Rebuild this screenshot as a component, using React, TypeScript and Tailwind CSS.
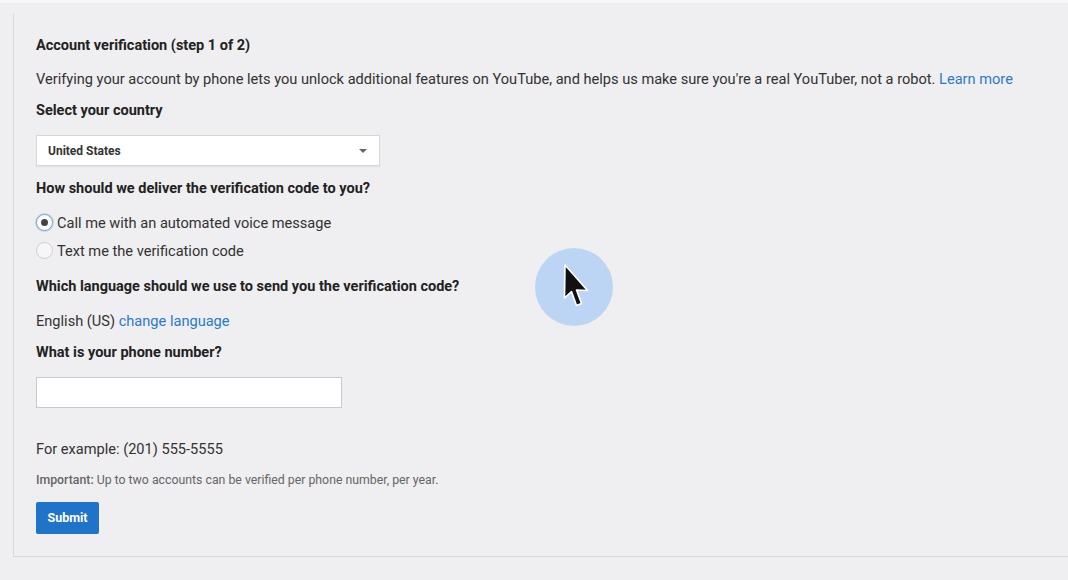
export default function App() {
  return (
    <div className="relative h-[580px] w-[1068px] overflow-hidden bg-[#efeef0] font-['Roboto','Liberation_Sans',sans-serif] text-[#222]">
      <div className="h-[3px] bg-[#f7f7f8]" />
      <div className="ml-[13px] mt-[10px] h-[544px] border-b border-l border-[#d9d8db] pl-[22px] pt-[25px]">
        <h1 className="text-[14.5px] font-bold leading-[16px]">Account verification (step 1 of 2)</h1>
        <p className="mt-[17px] text-[14.6px] leading-[16px] text-[#333]">
          Verifying your account by phone lets you unlock additional features on YouTube, and helps us make sure you're a real YouTuber, not a robot.{' '}
          <a className="text-[#2b7bcb]">Learn more</a>
        </p>
        <h2 className="mt-[16px] text-[14.5px] font-bold leading-[16px]">Select your country</h2>
        <div className="mt-[16px] flex h-[31px] w-[344px] items-center justify-between border border-[#d6d6d8] bg-white pl-[11px] pr-[12px] shadow-[0_1px_1px_rgba(0,0,0,0.05)]">
          <span className="text-[12px] font-bold text-[#333]">United States</span>
          <span className="h-0 w-0 border-l-[4px] border-r-[4px] border-t-[4px] border-l-transparent border-r-transparent border-t-[#666]" />
        </div>
        <h2 className="mt-[15px] text-[14.5px] font-bold leading-[16px]">How should we deliver the verification code to you?</h2>
        <div className="mt-[17px] flex items-center gap-[4px]">
          <span className="flex h-[17px] w-[17px] items-center justify-center rounded-full border border-[#7aa3d8] bg-white shadow-[0_0_0_1px_rgba(120,160,220,0.35)]">
            <span className="h-[7px] w-[7px] rounded-full bg-[#444]" />
          </span>
          <span className="text-[14.6px] leading-[16px] text-[#333]">Call me with an automated voice message</span>
        </div>
        <div className="mt-[11px] flex items-center gap-[4px]">
          <span className="h-[17px] w-[17px] rounded-full border border-[#cfcfd2] bg-[#f6f6f7]" />
          <span className="text-[14.6px] leading-[16px] text-[#333]">Text me the verification code</span>
        </div>
        <h2 className="mt-[20px] text-[14.5px] font-bold leading-[16px]">Which language should we use to send you the verification code?</h2>
        <p className="mt-[18px] text-[14.6px] leading-[16px] text-[#333]">
          English (US) <a className="text-[#2b7bcb]">change language</a>
        </p>
        <h2 className="mt-[16px] text-[14.5px] font-bold leading-[16px]">What is your phone number?</h2>
        <div className="mt-[16px] h-[31px] w-[306px] border border-[#c9c9cc] bg-white" />
        <p className="mt-[33px] text-[14.6px] leading-[16px] text-[#333]">For example: (201) 555-5555</p>
        <p className="mt-[17px] text-[12.3px] leading-[13px] text-[#666]">
          <span className="font-medium">Important:</span> Up to two accounts can be verified per phone number, per year.
        </p>
        <button className="mt-[15px] h-[32px] w-[63px] rounded-[2px] bg-[#1f73c9] text-[12.5px] font-bold text-white">Submit</button>
      </div>

      {/* cursor highlight */}
      <div className="absolute left-[535px] top-[248px] h-[78px] w-[78px] rounded-full bg-[#bdd5f5]">
        <svg className="absolute left-0 top-0" width="78" height="78" viewBox="0 0 78 78">
          <path
            d="M30 17 L29.5 50 L36.5 43.5 L41.5 57.5 L46.5 55.5 L41.5 42 L52.5 42.5 Z"
            fill="#111"
            stroke="#fff"
            strokeWidth="1.6"
            strokeLinejoin="round"
          />
        </svg>
      </div>
    </div>
  );
}
